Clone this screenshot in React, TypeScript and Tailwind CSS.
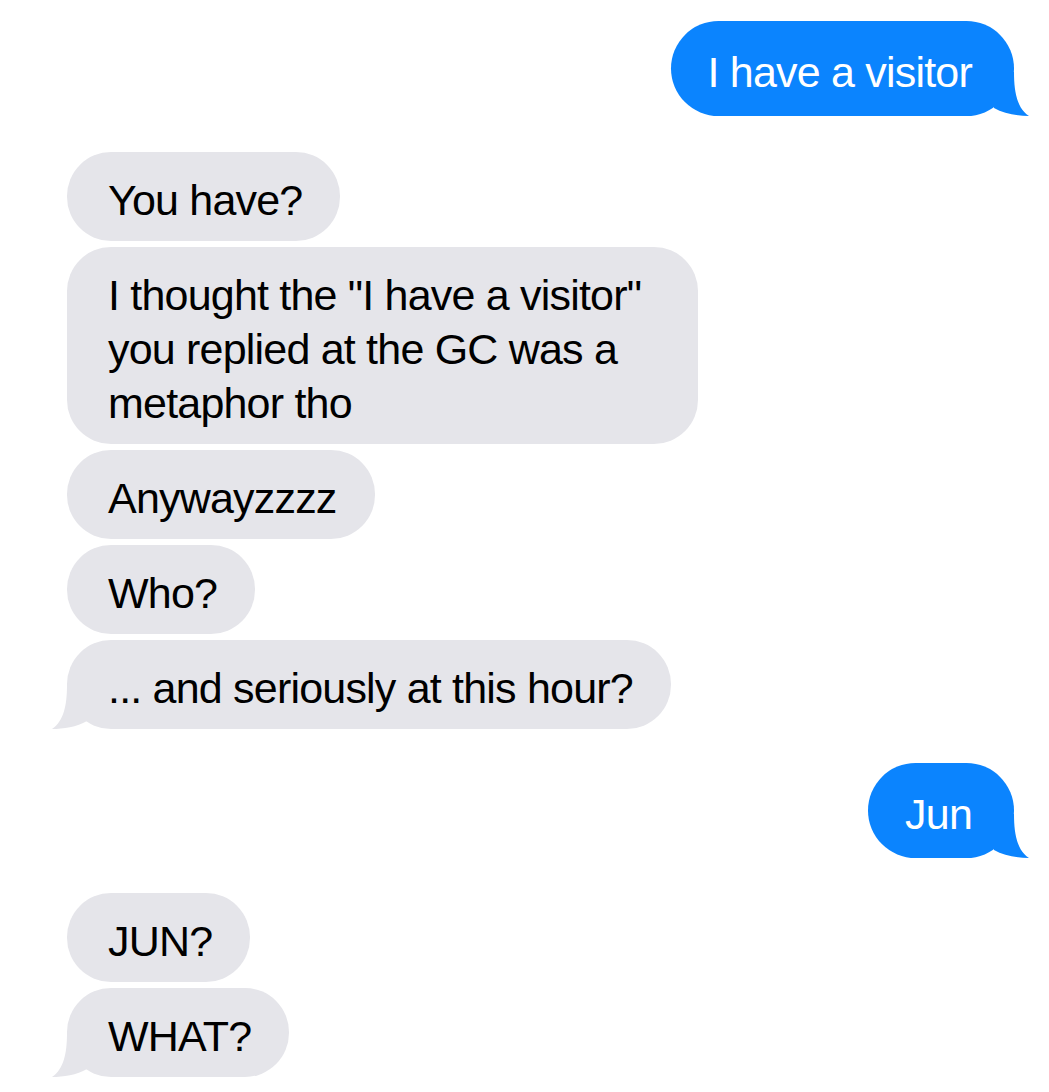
import React from "react";

type Msg = { from: "me" | "them"; lines: string[]; wide?: boolean };

const groups: Msg[][] = [
  [{ from: "me", lines: ["I have a visitor"] }],
  [
    { from: "them", lines: ["You have?"] },
    {
      from: "them",
      lines: ['I thought the "I have a visitor"', "you replied at the GC was a", "metaphor tho"],
      wide: true,
    },
    { from: "them", lines: ["Anywayzzzz"] },
    { from: "them", lines: ["Who?"] },
    { from: "them", lines: ["... and seriously at this hour?"] },
  ],
  [{ from: "me", lines: ["Jun"] }],
  [
    { from: "them", lines: ["JUN?"] },
    { from: "them", lines: ["WHAT?"] },
  ],
];

const groupGaps = ["mt-0", "mt-[36px]", "mt-[34px]", "mt-[35px]"];

export default function App() {
  return (
    <div
      className="min-h-[1092px] w-full bg-white pt-[21px] pl-[67px] pr-[35px]"
      style={{ fontFamily: '"Liberation Sans", Arial, sans-serif' }}
    >
      {groups.map((group, gi) => (
        <div key={gi} className={`flex flex-col gap-[6px] ${groupGaps[gi]}`}>
          {group.map((msg, mi) => (
            <Bubble key={mi} msg={msg} tail={mi === group.length - 1} />
          ))}
        </div>
      ))}
    </div>
  );
}

function Bubble({ msg, tail }: { msg: Msg; tail: boolean }) {
  const mine = msg.from === "me";
  let cls = mine
    ? "relative w-fit rounded-[48px] bg-[#0b84fe] pt-[24px] pb-[17px] pl-[37px] pr-[42px] text-white"
    : "relative w-fit rounded-[44px] bg-[#e5e5ea] pt-[21px] pb-[14px] pl-[41px] text-black";
  if (!mine) cls += msg.wide ? " pr-[57px]" : " pr-[38px]";

  return (
    <div className={mine ? "flex justify-end" : "flex justify-start"}>
      <div className={cls}>
        <div className="relative z-10 whitespace-nowrap text-[43px] leading-[54px] tracking-[-0.8px]">
          {msg.lines.map((line, i) => (
            <div key={i}>{line}</div>
          ))}
        </div>
        {tail && mine && (
          <svg
            className="absolute bottom-0 right-[-16px]"
            width="40"
            height="44"
            viewBox="0 0 40 44"
          >
            <path d="M24 0 C24 20 27 36 39 44 C28 44 14 42 4 36 L4 0 Z" fill="#0b84fe" />
          </svg>
        )}
        {tail && !mine && (
          <svg
            className="absolute bottom-0 left-[-16px]"
            width="40"
            height="44"
            viewBox="0 0 40 44"
          >
            <path d="M16 0 C16 20 13 36 1 44 C12 44 26 42 36 36 L36 0 Z" fill="#e5e5ea" />
          </svg>
        )}
      </div>
    </div>
  );
}
